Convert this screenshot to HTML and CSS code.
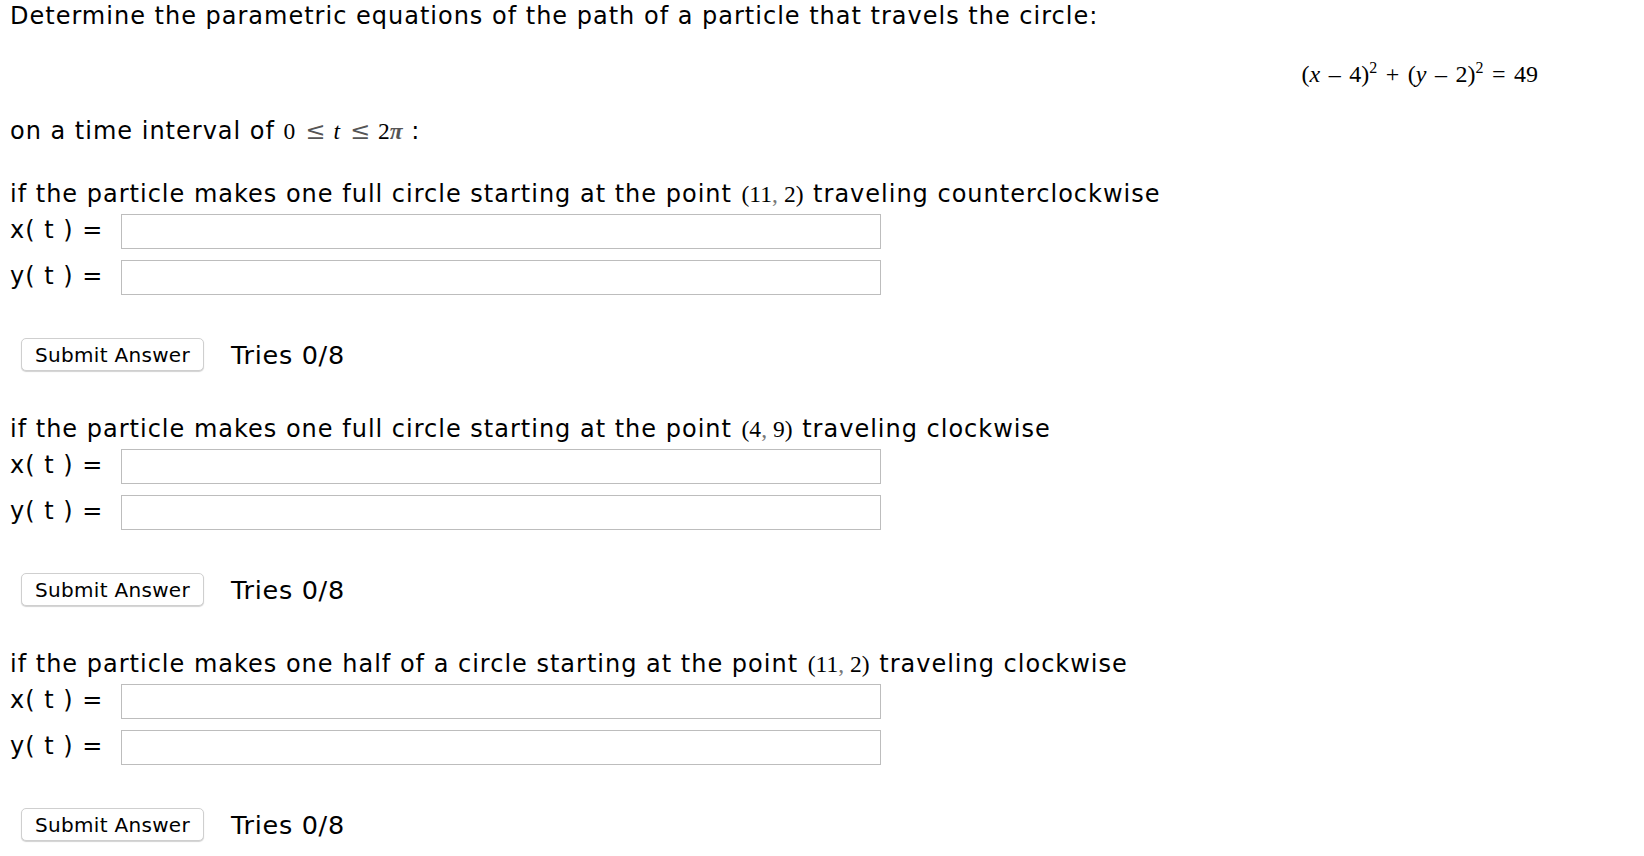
FILE: index.html
```html
<!DOCTYPE html>
<html>
  <head>
    <meta charset="UTF-8" />
    <title>Parametric equations</title>
    <link rel="stylesheet" href="styles.css">
  </head>
  <body>
    <main class="problem">
      <p class="line title">Determine the parametric equations of the path of a particle that travels the circle:</p>
      <p class="line display-math">
        <span class="m">(<i>x</i><span class="op">&ndash;</span>4)<sup>2</sup><span class="op">+</span>(<i>y</i><span class="op">&ndash;</span>2)<sup>2</sup><span class="op">=</span>49</span>
      </p>
      <p class="line interval">on a time interval of <span class="m">0<span class="rel">&le;</span><i>t</i><span class="rel">&le;</span>2<i class="pi">&pi;</i></span> :</p>

      <section class="part">
        <p class="line question">if the particle makes one full circle starting at the point <span class="m">(11<span class="comma">,</span>2)</span> traveling counterclockwise</p>
        <div class="answer-row"><label class="fn">x( t ) =</label><input class="answer" type="text"></div>
        <div class="answer-row"><label class="fn">y( t ) =</label><input class="answer" type="text"></div>
        <div class="submit-row"><button class="submit">Submit Answer</button><span class="tries">Tries 0/8</span></div>
      </section>

      <section class="part">
        <p class="line question">if the particle makes one full circle starting at the point <span class="m">(4<span class="comma">,</span>9)</span> traveling clockwise</p>
        <div class="answer-row"><label class="fn">x( t ) =</label><input class="answer" type="text"></div>
        <div class="answer-row"><label class="fn">y( t ) =</label><input class="answer" type="text"></div>
        <div class="submit-row"><button class="submit">Submit Answer</button><span class="tries">Tries 0/8</span></div>
      </section>

      <section class="part">
        <p class="line question">if the particle makes one half of a circle starting at the point <span class="m">(11<span class="comma">,</span>2)</span> traveling clockwise</p>
        <div class="answer-row"><label class="fn">x( t ) =</label><input class="answer" type="text"></div>
        <div class="answer-row"><label class="fn">y( t ) =</label><input class="answer" type="text"></div>
        <div class="submit-row"><button class="submit">Submit Answer</button><span class="tries">Tries 0/8</span></div>
      </section>
    </main>
  </body>
</html>
```

FILE: styles.css
```css
* {
  box-sizing: border-box;
}
body {
  margin: 0;
  background: #ffffff;
  color: #000000;
  font-family: "DejaVu Sans", Verdana, sans-serif;
  font-size: 24px;
  letter-spacing: 1px;
}
.problem {
  padding: 2px 0 0 10px;
}
.line {
  margin: 0;
  line-height: 28px;
  white-space: nowrap;
}
.m {
  font-family: "Liberation Serif", "Times New Roman", serif;
  font-size: 23.5px;
  letter-spacing: 0;
}
.m i {
  font-style: italic;
}
.m sup {
  font-size: 16px;
  line-height: 0;
}
.op {
  margin: 0 8.5px;
}
.display-math {
  margin-top: 30px;
  text-align: right;
  padding-right: 106px;
}
.display-math .m {
  font-size: 24px;
}
.interval {
  margin-top: 29px;
}
.rel {
  display: inline-block;
  font-family: "DejaVu Serif", serif;
  font-size: 24px;
  margin: 0 8px 0 10px;
  color: #555555;
}
.pi {
  font-weight: bold;
  color: #555555;
}
.comma {
  color: #777777;
  margin-right: 6px;
}
.question .m {
  margin: 0 1px;
}
.part {
  padding-bottom: 44px;
}
.question {
  margin-top: 35px;
}
.part + .part .question {
  margin-top: 0;
}
.answer-row {
  display: flex;
  align-items: center;
  height: 35px;
  margin-top: 6px;
}
.answer-row + .answer-row {
  margin-top: 11px;
}
.fn {
  width: 111px;
  padding-bottom: 3px;
}
.answer {
  width: 760px;
  height: 35px;
  border: 1px solid #bdbdbd;
  border-radius: 0;
  background: #ffffff;
  margin: 0;
}
.submit-row {
  display: flex;
  align-items: center;
  margin-top: 43px;
  padding-left: 11px;
}
.submit {
  height: 33px;
  width: 183px;
  padding: 0;
  font-family: "DejaVu Sans", Verdana, sans-serif;
  font-size: 20px;
  letter-spacing: 0.3px;
  color: #000000;
  background: #ffffff;
  border: 1px solid #cfcfcf;
  border-radius: 5px;
  box-shadow: 0 1px 1px rgba(0, 0, 0, 0.18);
}
.tries {
  margin-left: 27px;
  font-size: 25.5px;
  letter-spacing: 0.7px;
}
```
